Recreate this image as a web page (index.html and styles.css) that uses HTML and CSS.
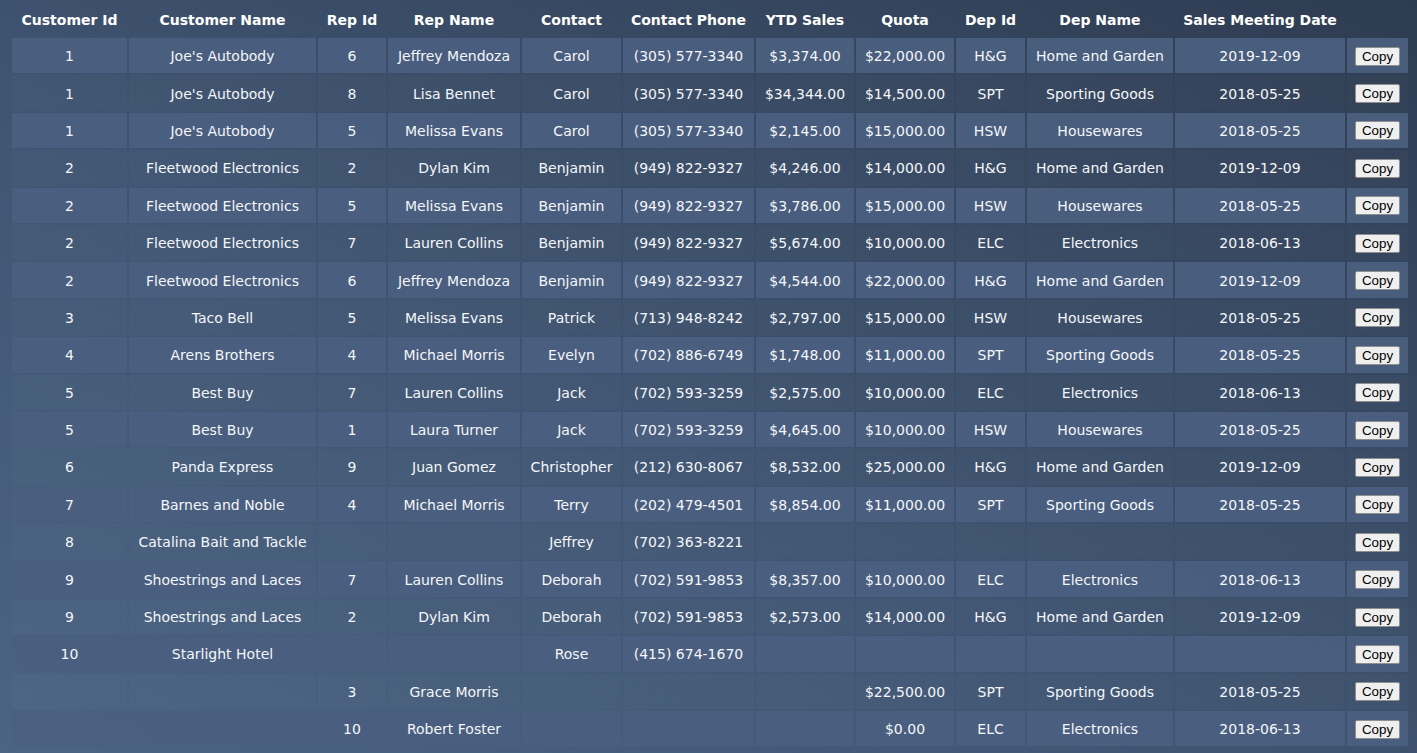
FILE: index.html
```html
<!DOCTYPE html>
<html lang="en">
<head>
  <meta charset="UTF-8" />
  <meta name="viewport" content="width=device-width, initial-scale=1.0"/>
  <title>Customer Sales Reps</title>
  <link rel="stylesheet" href="styles.css">
</head>
<body>
  <div class="page">
    <table class="sales-table">
      <colgroup>
        <col class="c-custid"><col class="c-custname"><col class="c-repid"><col class="c-repname">
        <col class="c-contact"><col class="c-phone"><col class="c-ytd"><col class="c-quota">
        <col class="c-depid"><col class="c-depname"><col class="c-date"><col class="c-copy">
      </colgroup>
      <thead>
        <tr>
          <th>Customer Id</th><th>Customer Name</th><th>Rep Id</th><th>Rep Name</th>
          <th>Contact</th><th>Contact Phone</th><th>YTD Sales</th><th>Quota</th>
          <th>Dep Id</th><th>Dep Name</th><th>Sales Meeting Date</th><th></th>
        </tr>
      </thead>
      <tbody>
        <tr><td>1</td><td>Joe's Autobody</td><td>6</td><td>Jeffrey Mendoza</td><td>Carol</td><td>(305) 577-3340</td><td>$3,374.00</td><td>$22,000.00</td><td>H&amp;G</td><td>Home and Garden</td><td>2019-12-09</td><td><button class="copy-btn">Copy</button></td></tr>
        <tr><td>1</td><td>Joe's Autobody</td><td>8</td><td>Lisa Bennet</td><td>Carol</td><td>(305) 577-3340</td><td>$34,344.00</td><td>$14,500.00</td><td>SPT</td><td>Sporting Goods</td><td>2018-05-25</td><td><button class="copy-btn">Copy</button></td></tr>
        <tr><td>1</td><td>Joe's Autobody</td><td>5</td><td>Melissa Evans</td><td>Carol</td><td>(305) 577-3340</td><td>$2,145.00</td><td>$15,000.00</td><td>HSW</td><td>Housewares</td><td>2018-05-25</td><td><button class="copy-btn">Copy</button></td></tr>
        <tr><td>2</td><td>Fleetwood Electronics</td><td>2</td><td>Dylan Kim</td><td>Benjamin</td><td>(949) 822-9327</td><td>$4,246.00</td><td>$14,000.00</td><td>H&amp;G</td><td>Home and Garden</td><td>2019-12-09</td><td><button class="copy-btn">Copy</button></td></tr>
        <tr><td>2</td><td>Fleetwood Electronics</td><td>5</td><td>Melissa Evans</td><td>Benjamin</td><td>(949) 822-9327</td><td>$3,786.00</td><td>$15,000.00</td><td>HSW</td><td>Housewares</td><td>2018-05-25</td><td><button class="copy-btn">Copy</button></td></tr>
        <tr><td>2</td><td>Fleetwood Electronics</td><td>7</td><td>Lauren Collins</td><td>Benjamin</td><td>(949) 822-9327</td><td>$5,674.00</td><td>$10,000.00</td><td>ELC</td><td>Electronics</td><td>2018-06-13</td><td><button class="copy-btn">Copy</button></td></tr>
        <tr><td>2</td><td>Fleetwood Electronics</td><td>6</td><td>Jeffrey Mendoza</td><td>Benjamin</td><td>(949) 822-9327</td><td>$4,544.00</td><td>$22,000.00</td><td>H&amp;G</td><td>Home and Garden</td><td>2019-12-09</td><td><button class="copy-btn">Copy</button></td></tr>
        <tr><td>3</td><td>Taco Bell</td><td>5</td><td>Melissa Evans</td><td>Patrick</td><td>(713) 948-8242</td><td>$2,797.00</td><td>$15,000.00</td><td>HSW</td><td>Housewares</td><td>2018-05-25</td><td><button class="copy-btn">Copy</button></td></tr>
        <tr><td>4</td><td>Arens Brothers</td><td>4</td><td>Michael Morris</td><td>Evelyn</td><td>(702) 886-6749</td><td>$1,748.00</td><td>$11,000.00</td><td>SPT</td><td>Sporting Goods</td><td>2018-05-25</td><td><button class="copy-btn">Copy</button></td></tr>
        <tr><td>5</td><td>Best Buy</td><td>7</td><td>Lauren Collins</td><td>Jack</td><td>(702) 593-3259</td><td>$2,575.00</td><td>$10,000.00</td><td>ELC</td><td>Electronics</td><td>2018-06-13</td><td><button class="copy-btn">Copy</button></td></tr>
        <tr><td>5</td><td>Best Buy</td><td>1</td><td>Laura Turner</td><td>Jack</td><td>(702) 593-3259</td><td>$4,645.00</td><td>$10,000.00</td><td>HSW</td><td>Housewares</td><td>2018-05-25</td><td><button class="copy-btn">Copy</button></td></tr>
        <tr><td>6</td><td>Panda Express</td><td>9</td><td>Juan Gomez</td><td>Christopher</td><td>(212) 630-8067</td><td>$8,532.00</td><td>$25,000.00</td><td>H&amp;G</td><td>Home and Garden</td><td>2019-12-09</td><td><button class="copy-btn">Copy</button></td></tr>
        <tr><td>7</td><td>Barnes and Noble</td><td>4</td><td>Michael Morris</td><td>Terry</td><td>(202) 479-4501</td><td>$8,854.00</td><td>$11,000.00</td><td>SPT</td><td>Sporting Goods</td><td>2018-05-25</td><td><button class="copy-btn">Copy</button></td></tr>
        <tr><td>8</td><td>Catalina Bait and Tackle</td><td></td><td></td><td>Jeffrey</td><td>(702) 363-8221</td><td></td><td></td><td></td><td></td><td></td><td><button class="copy-btn">Copy</button></td></tr>
        <tr><td>9</td><td>Shoestrings and Laces</td><td>7</td><td>Lauren Collins</td><td>Deborah</td><td>(702) 591-9853</td><td>$8,357.00</td><td>$10,000.00</td><td>ELC</td><td>Electronics</td><td>2018-06-13</td><td><button class="copy-btn">Copy</button></td></tr>
        <tr><td>9</td><td>Shoestrings and Laces</td><td>2</td><td>Dylan Kim</td><td>Deborah</td><td>(702) 591-9853</td><td>$2,573.00</td><td>$14,000.00</td><td>H&amp;G</td><td>Home and Garden</td><td>2019-12-09</td><td><button class="copy-btn">Copy</button></td></tr>
        <tr><td>10</td><td>Starlight Hotel</td><td></td><td></td><td>Rose</td><td>(415) 674-1670</td><td></td><td></td><td></td><td></td><td></td><td><button class="copy-btn">Copy</button></td></tr>
        <tr><td></td><td></td><td>3</td><td>Grace Morris</td><td></td><td></td><td></td><td>$22,500.00</td><td>SPT</td><td>Sporting Goods</td><td>2018-05-25</td><td><button class="copy-btn">Copy</button></td></tr>
        <tr><td></td><td></td><td>10</td><td>Robert Foster</td><td></td><td></td><td></td><td>$0.00</td><td>ELC</td><td>Electronics</td><td>2018-06-13</td><td><button class="copy-btn">Copy</button></td></tr>
      </tbody>
    </table>
  </div>
</body>
</html>
```

FILE: styles.css
```css
* {
  margin: 0;
  padding: 0;
  box-sizing: border-box;
}

html, body {
  height: 100%;
}

body {
  font-family: 'DejaVu Sans', Verdana, sans-serif;
  font-size: 14px;
  color: #f4f6fa;
  background: linear-gradient(to top right, #4b6483 0%, #3f5471 45%, #2e3c51 100%);
  overflow: hidden;
}

.page {
  padding: 0 10px;
}

.sales-table {
  width: 1400px;
  table-layout: fixed;
  border-collapse: separate;
  border-spacing: 2px;
}

.c-custid { width: 115px; }
.c-custname { width: 187px; }
.c-repid { width: 68px; }
.c-repname { width: 132px; }
.c-contact { width: 99px; }
.c-phone { width: 131px; }
.c-ytd { width: 98px; }
.c-quota { width: 98px; }
.c-depid { width: 69px; }
.c-depname { width: 146px; }
.c-date { width: 170px; }
.c-copy { width: 61px; }

.sales-table th {
  font-weight: bold;
  font-size: 14px;
  color: #ffffff;
  height: 34px;
  padding: 2px 4px 0;
  text-align: center;
  white-space: nowrap;
}

.sales-table td {
  height: 35.4px;
  padding: 1px 4px 0;
  text-align: center;
  white-space: nowrap;
  background: rgba(255, 255, 255, 0.02);
}

.sales-table tbody tr:nth-child(odd) td {
  background: rgba(75, 96, 128, 0.92);
}

.copy-btn {
  font-family: 'Liberation Sans', Arial, sans-serif;
  font-size: 13.33px;
  color: #000;
  background: #efefef;
  border: 1px solid #8f8f8f;
  border-radius: 2px;
  padding: 1px 6px;
  line-height: 15px;
  cursor: pointer;
}
```
